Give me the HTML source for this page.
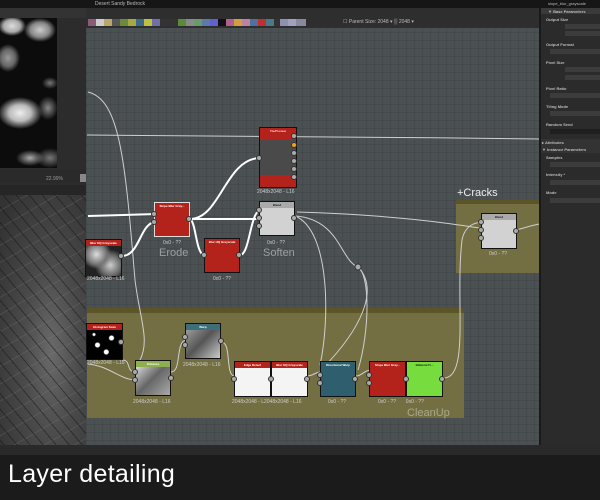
<!DOCTYPE html>
<html><head><meta charset="utf-8"><style>
*{margin:0;padding:0;box-sizing:border-box}
body{width:600px;height:500px;overflow:hidden;background:#1b1b1b;font-family:"Liberation Sans",sans-serif;position:relative}
.a{position:absolute}
.node{position:absolute;border:1.5px solid #111;}
.nh{height:6px;font-size:3px;color:#fff;text-align:center;line-height:6px;font-weight:bold}
.lbl{position:absolute;font-size:5px;color:#ccc;white-space:nowrap}
.big{position:absolute;font-size:11px;color:#9aa0a0}
.pin{position:absolute;width:6px;height:6px;border-radius:50%;background:#aaa;border:1px solid #333}
.rp{position:absolute;font-size:4px;color:#bbb;font-weight:bold}
.fld{position:absolute;height:5px;background:#3c3c3c}
</style></head><body>
<div class="a" style="left:0;top:0;width:600px;height:8px;background:#161616"></div>
<div class="a" style="left:95px;top:1px;font-size:5px;color:#bbb">Desert Sandy Bedrock</div>
<div class="a" style="left:548px;top:1px;font-size:4px;color:#bbb">slope_blur_grayscale</div>
<div class="a" style="left:0;top:8px;width:86px;height:437px;background:#2c2c2c"></div>
<div class="a" style="left:0;top:8px;width:86px;height:10px;background:#333"></div>
<div class="a" style="left:0;top:18px;width:57px;height:150px;background:
radial-gradient(ellipse 14px 10px at 12px 8px,#ddd,#aaa 60%,transparent 100%),
radial-gradient(ellipse 16px 12px at 40px 12px,#ccc,#888 60%,transparent 100%),
radial-gradient(ellipse 12px 14px at 8px 40px,#999,#666 60%,transparent 100%),
radial-gradient(ellipse 22px 16px at 20px 95px,#eee,#bbb 50%,transparent 100%),
radial-gradient(ellipse 10px 12px at 48px 90px,#888,transparent 100%),
radial-gradient(ellipse 14px 8px at 30px 140px,#aaa,transparent 100%),
radial-gradient(ellipse 14px 10px at 50px 140px,#777,transparent 100%),
radial-gradient(ellipse 8px 6px at 50px 65px,#777,transparent 100%),
#0c0c0c"></div>
<div class="a" style="left:0;top:169px;width:86px;height:14px;background:#2a2a2a"></div>
<div class="a" style="left:46px;top:176px;font-size:5px;color:#999">22.99%</div>
<div class="a" style="left:80px;top:174px;width:6px;height:8px;background:#888"></div>
<div class="a" style="left:0;top:185px;width:86px;height:10px;background:#262626"></div>
<div class="a" style="left:0;top:195px;width:86px;height:260px;background:radial-gradient(ellipse at 60% 60%,#6a6a6a 0,#4a4a4a 40%,#333 90%),#444"></div>
<div class="a" style="left:0;top:195px;width:86px;height:260px;background:repeating-linear-gradient(50deg,transparent 0 9px,rgba(20,20,20,.5) 9px 10px),repeating-linear-gradient(-30deg,transparent 0 14px,rgba(140,140,140,.2) 14px 15px)"></div>
<div class="a" style="left:86px;top:8px;width:454px;height:437px;background-color:#4b5052;background-image:linear-gradient(rgba(0,0,0,.08) 1px,transparent 1px),linear-gradient(90deg,rgba(0,0,0,.08) 1px,transparent 1px);background-size:8px 8px"></div>
<div class="a" style="left:86px;top:8px;width:454px;height:20px;background:#2e2e2e"></div>
<div class="a" style="left:88px;top:19px;height:7px;width:218px;background:linear-gradient(90deg,#8a5a7a 0 8px,#ccc 8px 16px,#bba66a 16px 24px,#555 24px 32px,#6a8a40 32px 40px,#a8a840 40px 48px,#3a6a8a 48px 56px,#c0c040 56px 64px,#7070a8 64px 72px,#333 72px 90px,#5a8a3a 90px 98px,#8a8a8a 98px 106px,#6a9a6a 106px 114px,#5a7aaa 114px 122px,#6060d0 122px 130px,#111 130px 138px,#b06090 138px 146px,#d0a040 146px 154px,#c080a0 154px 162px,#5070a0 162px 170px,#c03030 170px 178px,#4a7a8a 178px 186px,#333 186px 192px,#9090b0 192px 200px,#a0a0c0 200px 208px,#8888a0 208px 216px)"></div>
<div class="a" style="left:343px;top:19px;font-size:5px;color:#bbb">☐ Parent Size: 2048 ▾ ▒ 2048 ▾</div>
<div class="a" style="left:456px;top:200px;width:84px;height:73px;background:#746f42"></div>
<div class="a" style="left:456px;top:200px;width:84px;height:4px;background:#5b5528"></div>
<div class="a" style="left:457px;top:187px;font-size:11px;color:#eee">+Cracks</div>
<div class="a" style="left:87px;top:308px;width:377px;height:110px;background:#746f42"></div>
<div class="a" style="left:87px;top:308px;width:377px;height:5px;background:#5b5528"></div>
<div class="big" style="left:407px;top:407px;color:#aaa78a">CleanUp</div>
<svg class="a" style="left:0;top:0" width="600" height="500">
<g fill="none" stroke="#cfcfcf" stroke-width="1">
<path d="M87 135 C300 137 400 137 540 139"/>
<path d="M88 92 C120 100 125 160 135 280 C140 320 150 340 140 360"/>
<path d="M297 212 C400 215 460 225 486 229"/>
<path d="M296 216 C340 220 340 260 358 267 C370 275 370 330 358 370"/>
<path d="M358 267 C380 290 360 330 323 368"/>
<path d="M295 216 C330 230 330 320 320 365"/>
<path d="M443 378 C470 380 455 300 462 240 C465 225 475 222 485 222"/>
<path d="M122 360 C132 360 125 372 136 372"/>
<path d="M171 372 C182 372 175 342 186 340"/>
<path d="M221 342 C232 342 225 374 234 376"/>
<path d="M88 364 C110 366 120 380 136 380"/>
<path d="M307 376 C313 376 315 372 321 372"/>
<path d="M356 376 C362 376 364 370 371 370"/>
<path d="M516 230 C525 228 532 225 540 224"/>
</g>
<g fill="none" stroke="#fff" stroke-width="2">
<path d="M88 216 L156 214"/>
<path d="M122 256 C140 256 140 222 156 222"/>
<path d="M190 219 C220 219 225 160 259 158"/>
<path d="M190 219 L261 219"/>
<path d="M190 219 C196 222 196 254 204 255"/>
<path d="M240 255 C250 255 250 210 261 210"/>
</g>
<circle cx="358" cy="267" r="3" fill="#aaa" stroke="#333"/>
</svg>
<div class="node" style="left:259px;top:127px;width:38px;height:61px;background:#4a4a4a">
<div style="height:12px;background:#b4221c;font-size:3px;color:#fff;text-align:center;line-height:6px">Tile/Preview</div>
<div style="position:absolute;bottom:0;left:0;right:0;height:12px;background:#b4221c"></div></div>
<div class="pin" style="left:256px;top:155px"></div>
<div class="pin" style="left:291px;top:133px"></div><div class="pin" style="left:291px;top:142px;background:#f0a020"></div><div class="pin" style="left:291px;top:150px"></div><div class="pin" style="left:291px;top:158px"></div><div class="pin" style="left:291px;top:166px"></div><div class="pin" style="left:291px;top:174px"></div>
<div class="lbl" style="left:257px;top:189px">2048x2048 - L16</div>
<div class="node" style="left:154px;top:202px;width:36px;height:35px;background:#b4221c;border-color:#ddd"><div class="nh">Slope Blur Gray...</div></div>
<div class="pin" style="left:151px;top:211px"></div><div class="pin" style="left:151px;top:219px"></div><div class="pin" style="left:186px;top:216px"></div>
<div class="lbl" style="left:163px;top:240px">0x0 - ??</div><div class="big" style="left:159px;top:247px">Erode</div>
<div class="node" style="left:85px;top:239px;width:37px;height:38px;background:radial-gradient(circle at 30% 40%,#ddd,#777 30%,transparent 45%),radial-gradient(circle at 70% 70%,#ccc,#666 30%,transparent 45%),#222"><div class="nh" style="background:#b4221c">Blur HQ Grayscale</div></div>
<div class="pin" style="left:118px;top:253px"></div>
<div class="lbl" style="left:87px;top:276px">2048x2048 - L16</div>
<div class="node" style="left:204px;top:238px;width:36px;height:35px;background:#b4221c"><div class="nh">Blur HQ Grayscale</div></div>
<div class="pin" style="left:201px;top:252px"></div><div class="pin" style="left:236px;top:252px"></div>
<div class="lbl" style="left:213px;top:276px">0x0 - ??</div>
<div class="node" style="left:259px;top:201px;width:36px;height:35px;background:#d2d2d2"><div class="nh" style="background:#aaa;color:#222">Blend</div></div>
<div class="pin" style="left:256px;top:207px"></div><div class="pin" style="left:256px;top:215px"></div><div class="pin" style="left:256px;top:223px"></div><div class="pin" style="left:291px;top:215px"></div>
<div class="lbl" style="left:267px;top:240px">0x0 - ??</div><div class="big" style="left:263px;top:247px">Soften</div>
<div class="node" style="left:481px;top:213px;width:36px;height:36px;background:#d2d2d2"><div class="nh" style="background:#aaa;color:#222">Blend</div></div>
<div class="pin" style="left:478px;top:219px"></div><div class="pin" style="left:478px;top:227px"></div><div class="pin" style="left:478px;top:235px"></div><div class="pin" style="left:513px;top:228px"></div>
<div class="lbl" style="left:489px;top:251px">0x0 - ??</div>
<div class="node" style="left:86px;top:323px;width:37px;height:37px;background:radial-gradient(circle at 30% 60%,#fff 2px,transparent 3px),radial-gradient(circle at 70% 40%,#fff 2px,transparent 3px),radial-gradient(circle at 55% 80%,#fff 2px,transparent 3px),radial-gradient(circle at 20% 30%,#fff 1px,transparent 2px),#000"><div class="nh" style="background:#b4221c">Histogram Scan</div></div>
<div class="pin" style="left:118px;top:339px"></div>
<div class="lbl" style="left:87px;top:360px">2048x2048 - L16</div>
<div class="node" style="left:135px;top:360px;width:36px;height:36px;background:linear-gradient(135deg,#eee,#666 50%,#aaa)"><div class="nh" style="background:#8fae52">Distance</div></div>
<div class="pin" style="left:132px;top:369px"></div><div class="pin" style="left:132px;top:377px"></div><div class="pin" style="left:168px;top:375px"></div>
<div class="lbl" style="left:133px;top:399px">2048x2048 - L16</div>
<div class="node" style="left:185px;top:323px;width:36px;height:36px;background:linear-gradient(135deg,#aaa,#555 50%,#ccc)"><div class="nh" style="background:#3e6d7c">Warp</div></div>
<div class="pin" style="left:182px;top:334px"></div><div class="pin" style="left:182px;top:342px"></div><div class="pin" style="left:218px;top:338px"></div>
<div class="lbl" style="left:183px;top:362px">2048x2048 - L16</div>
<div class="node" style="left:234px;top:361px;width:37px;height:36px;background:#f4f4f4"><div class="nh" style="background:#b4221c">Edge Detect</div></div>
<div class="node" style="left:271px;top:361px;width:37px;height:36px;background:#f4f4f4"><div class="nh" style="background:#b4221c">Blur HQ Grayscale</div></div>
<div class="pin" style="left:231px;top:376px"></div><div class="pin" style="left:268px;top:376px"></div><div class="pin" style="left:304px;top:376px"></div>
<div class="lbl" style="left:232px;top:399px">2048x2048 - L2048x2048 - L16</div>
<div class="node" style="left:320px;top:361px;width:36px;height:36px;background:#2f5f6e"><div class="nh" style="background:#2f5f6e">Directional Warp</div></div>
<div class="pin" style="left:317px;top:372px"></div><div class="pin" style="left:317px;top:380px"></div><div class="pin" style="left:352px;top:376px"></div>
<div class="lbl" style="left:328px;top:399px">0x0 - ??</div>
<div class="node" style="left:369px;top:361px;width:37px;height:36px;background:#b4221c"><div class="nh">Slope Blur Gray...</div></div>
<div class="node" style="left:406px;top:361px;width:37px;height:36px;background:#77dd3f"><div class="nh" style="color:#222">Bilateral Fi...</div></div>
<div class="pin" style="left:366px;top:372px"></div><div class="pin" style="left:366px;top:380px"></div><div class="pin" style="left:403px;top:376px"></div><div class="pin" style="left:439px;top:376px"></div>
<div class="lbl" style="left:378px;top:399px">0x0 - ??&nbsp;&nbsp;&nbsp;&nbsp;&nbsp;&nbsp;&nbsp;0x0 - ??</div>
<div class="a" style="left:539px;top:8px;width:2px;height:437px;background:#1a1a1a"></div>
<div class="a" style="left:541px;top:8px;width:59px;height:437px;background:#2b2b2b"></div>
<div class="a" style="left:541px;top:8px;width:59px;height:6px;background:#3a3a3a"></div>
<div class="rp" style="left:548px;top:9px">▼ Base Parameters</div>
<div class="rp" style="left:546px;top:17px">Output Size</div><div class="fld" style="left:565px;top:24px;width:35px"></div><div class="fld" style="left:565px;top:31px;width:35px"></div>
<div class="rp" style="left:546px;top:42px">Output Format</div><div class="fld" style="left:550px;top:49px;width:50px"></div>
<div class="rp" style="left:546px;top:60px">Pixel Size</div><div class="fld" style="left:565px;top:67px;width:35px"></div><div class="fld" style="left:565px;top:75px;width:35px"></div>
<div class="rp" style="left:546px;top:86px">Pixel Ratio</div><div class="fld" style="left:550px;top:93px;width:50px"></div>
<div class="rp" style="left:546px;top:104px">Tiling Mode</div><div class="fld" style="left:550px;top:111px;width:50px"></div>
<div class="rp" style="left:546px;top:122px">Random Seed</div><div class="fld" style="left:550px;top:129px;width:50px;background:#1f1f1f"></div>
<div class="a" style="left:541px;top:139px;width:59px;height:14px;background:#333"></div>
<div class="rp" style="left:542px;top:140px">▸ Attributes</div><div class="rp" style="left:542px;top:147px">▼ Instance Parameters</div>
<div class="rp" style="left:546px;top:155px">Samples</div><div class="fld" style="left:550px;top:162px;width:50px"></div>
<div class="rp" style="left:546px;top:172px">Intensity *</div><div class="fld" style="left:550px;top:180px;width:50px"></div>
<div class="rp" style="left:546px;top:190px">Mode</div><div class="fld" style="left:550px;top:198px;width:50px"></div>
<div class="a" style="left:0;top:445px;width:600px;height:10px;background:#2a2a2a"></div>
<div class="a" style="left:0;top:455px;width:600px;height:45px;background:#1b1b1b"></div>
<div class="a" style="left:8px;top:460px;font-size:25px;color:#fff;letter-spacing:0.3px">Layer detailing</div>
</body></html>
